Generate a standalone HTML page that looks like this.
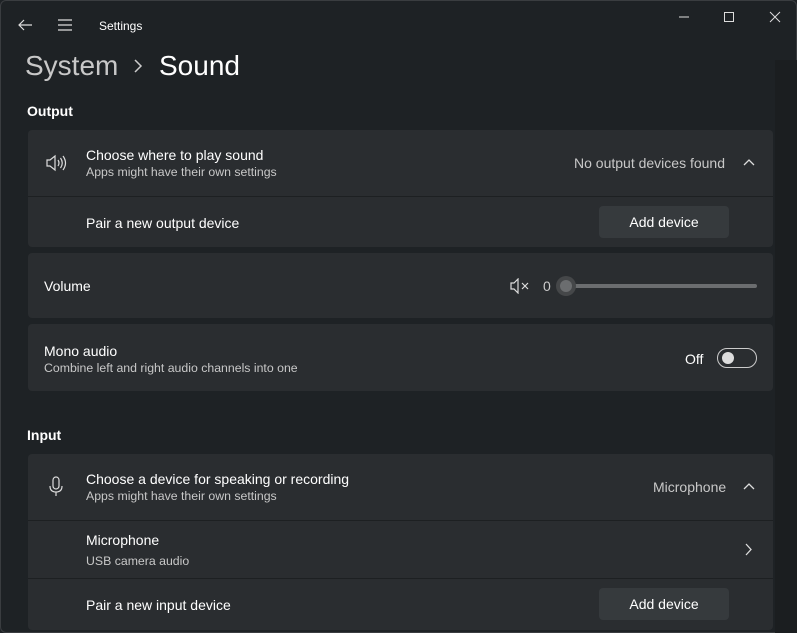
<!DOCTYPE html><html><head><style>
body{margin:0;width:797px;height:633px;background:#1e2225;font-family:"Liberation Sans",sans-serif;color:#fff;position:relative;overflow:hidden}
.a{position:absolute}
.card{position:absolute;left:28px;width:745px;background:#2a2d30;border-radius:4px}
.t{font-size:14px;color:#fff}
.s{font-size:12.3px;color:#c8c8c8}
.btn{position:absolute;left:599px;width:130px;height:32px;background:#363a3d;border-radius:4px;font-size:14px;text-align:center;line-height:32px}
.div{position:absolute;left:28px;width:745px;height:1px;background:#1d2022}
</style></head><body>
<div class="a" style="left:0;top:0;width:797px;height:633px;border:1px solid #3a3d40;box-sizing:border-box;border-radius:6px"></div>
<div class="a" style="left:775px;top:60px;width:22px;height:573px;background:#1b1e20"></div>
<svg class="a" style="left:17px;top:18px" width="16" height="14"><path d="M15 7H2M7 2L2 7l5 5" stroke="#ddd" fill="none" stroke-width="1.2"/></svg>
<svg class="a" style="left:57px;top:18px" width="16" height="14"><path d="M1 2h14M1 7h14M1 12h14" stroke="#ddd" stroke-width="1.2"/></svg>
<div class="a" style="left:99px;top:19px;font-size:12px">Settings</div>
<svg class="a" style="left:677px;top:10px" width="110" height="16"><path d="M2 7h10" stroke="#ddd"/><rect x="47.5" y="2.5" width="9" height="9" stroke="#ddd" fill="none"/><path d="M93 2l10 10M103 2L93 12" stroke="#ddd"/></svg>
<div class="a" style="left:25px;top:50px;font-size:28px;color:#c8c8c8">System</div>
<svg class="a" style="left:133px;top:59px" width="10" height="14"><path d="M2 1l6 6-6 6" stroke="#ccc" fill="none" stroke-width="1.5"/></svg>
<div class="a" style="left:159px;top:50px;font-size:28px">Sound</div>
<div class="a" style="left:27px;top:103px;font-size:14px;font-weight:bold">Output</div>
<div class="card" style="top:130px;height:117px"></div>
<div class="div" style="top:196px"></div>
<svg class="a" style="left:45px;top:154px" width="22" height="18"><path d="M2 6h3l5-4v14l-5-4H2z" stroke="#ddd" fill="none" stroke-width="1.2"/><path d="M13 6q2 3 0 6M15.5 4q3.5 5 0 10M18 2q5 7 0 14" stroke="#ddd" fill="none" stroke-width="1.2"/></svg>
<div class="a t" style="left:86px;top:147px">Choose where to play sound</div>
<div class="a s" style="left:86px;top:165px">Apps might have their own settings</div>
<div class="a" style="left:574px;top:155px;font-size:14px;color:#c8c8c8">No output devices found</div>
<svg class="a" style="left:743px;top:158px" width="12" height="8"><path d="M1 7l5-5 5 5" stroke="#ddd" fill="none" stroke-width="1.3"/></svg>
<div class="a t" style="left:86px;top:215px">Pair a new output device</div>
<div class="btn" style="top:206px">Add device</div>
<div class="card" style="top:253px;height:65px"></div>
<div class="a t" style="left:44px;top:278px">Volume</div>
<svg class="a" style="left:510px;top:278px" width="22" height="16"><path d="M1 5h3l4-4v14l-4-4H1z" stroke="#ddd" fill="none" stroke-width="1.2"/><path d="M12 5l6 6M18 5l-6 6" stroke="#ddd" stroke-width="1.2"/></svg>
<div class="a" style="left:543px;top:278px;font-size:14px;color:#ccc">0</div>
<div class="a" style="left:566px;top:284px;width:191px;height:4px;background:#6b6d6f;border-radius:2px"></div>
<div class="a" style="left:556px;top:276px;width:20px;height:20px;border-radius:50%;background:#454749"></div>
<div class="a" style="left:560px;top:280px;width:12px;height:12px;border-radius:50%;background:#6b6d6f"></div>
<div class="card" style="top:324px;height:67px"></div>
<div class="a t" style="left:44px;top:343px">Mono audio</div>
<div class="a s" style="left:44px;top:361px">Combine left and right audio channels into one</div>
<div class="a" style="left:685px;top:351px;font-size:14px">Off</div>
<div class="a" style="left:717px;top:348px;width:38px;height:18px;border:1px solid #ccc;border-radius:10px"></div>
<div class="a" style="left:722px;top:352px;width:12px;height:12px;border-radius:50%;background:#ddd"></div>
<div class="a" style="left:27px;top:427px;font-size:14px;font-weight:bold">Input</div>
<div class="card" style="top:454px;height:176px"></div>
<div class="div" style="top:520px"></div>
<div class="div" style="top:578px"></div>
<svg class="a" style="left:49px;top:476px" width="14" height="22"><rect x="4" y="1" width="6" height="12" rx="3" stroke="#ddd" fill="none" stroke-width="1.2"/><path d="M1 10q0 6 6 6 6 0 6-6M7 16v4" stroke="#ddd" fill="none" stroke-width="1.2"/></svg>
<div class="a t" style="left:86px;top:471px">Choose a device for speaking or recording</div>
<div class="a s" style="left:86px;top:489px">Apps might have their own settings</div>
<div class="a" style="left:653px;top:479px;font-size:14px;color:#c8c8c8">Microphone</div>
<svg class="a" style="left:743px;top:482px" width="12" height="8"><path d="M1 7l5-5 5 5" stroke="#ddd" fill="none" stroke-width="1.3"/></svg>
<div class="a t" style="left:86px;top:532px">Microphone</div>
<div class="a s" style="left:86px;top:554px">USB camera audio</div>
<svg class="a" style="left:745px;top:543px" width="8" height="13"><path d="M1 1l5 5.5L1 12" stroke="#ddd" fill="none" stroke-width="1.3"/></svg>
<div class="a t" style="left:86px;top:597px">Pair a new input device</div>
<div class="btn" style="top:588px">Add device</div>
</body></html>
